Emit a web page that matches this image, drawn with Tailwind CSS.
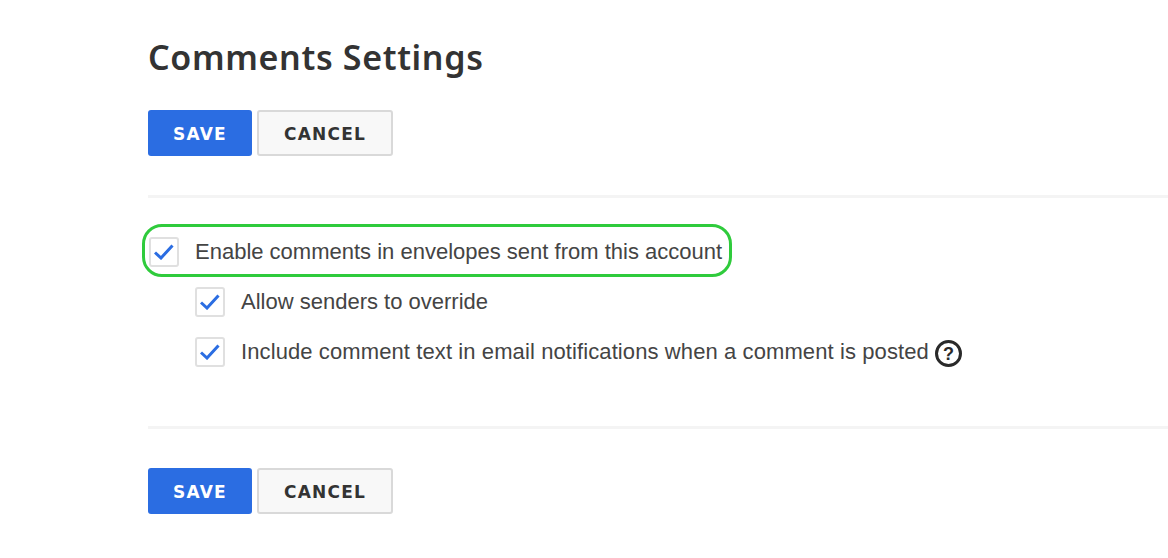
<!DOCTYPE html>
<html lang="en">
<head>
    <meta charset="UTF-8">
    <title>Comments Settings</title>
    <script src="https://cdn.jsdelivr.net/npm/@tailwindcss/browser@4"></script>
</head>
<body class="bg-white h-[558px] overflow-hidden pl-[148px] pt-[37px] font-['Liberation_Sans',sans-serif] text-[#444]">
    <h1 class="font-['Noto_Sans',sans-serif] text-[34px] leading-10 font-semibold text-[#333] tracking-[0.65px]">Comments Settings</h1>

    <div class="flex gap-[5px] mt-[33px]">
        <button class="w-[104px] h-[46px] pt-[3px] rounded-[3px] bg-[#2b6de2] text-white font-['DejaVu_Sans',sans-serif] font-bold text-[17px] tracking-[1.2px]">SAVE</button>
        <button class="w-[136px] h-[46px] pt-[3px] rounded-[3px] bg-[#f8f8f8] border-2 border-[#d9d9d9] text-[#333] font-['DejaVu_Sans',sans-serif] font-bold text-[17px] tracking-[1.2px]">CANCEL</button>
    </div>

    <div class="h-[3px] bg-[#f4f4f4] mt-[39px]"></div>

    <div class="relative mt-[39px] flex items-center h-[30px] gap-[16px] pl-px text-[22px]">
        <span class="absolute left-[-6px] top-[-13px] w-[590px] h-[53px] rounded-[20px] border-[3px] border-[#2fcb3c]"></span>
        <span class="w-[30px] h-[30px] rounded-[3px] border-2 border-[#e0e0e0] bg-white flex items-center justify-center">
            <svg width="20" height="16" viewBox="0 0 20 16" fill="none"><path d="M1 8.5 L7 14 L18.5 1.5" stroke="#2b6de2" stroke-width="3"/></svg>
        </span>
        <span class="-mt-[2px]">Enable comments in envelopes sent from this account</span>
    </div>

    <div class="mt-[20px] ml-[47px] flex items-center h-[30px] gap-[16px] text-[22px]">
        <span class="w-[30px] h-[30px] rounded-[3px] border-2 border-[#e0e0e0] bg-white flex items-center justify-center">
            <svg width="20" height="16" viewBox="0 0 20 16" fill="none"><path d="M1 8.5 L7 14 L18.5 1.5" stroke="#2b6de2" stroke-width="3"/></svg>
        </span>
        <span class="-mt-[2px]">Allow senders to override</span>
    </div>

    <div class="mt-[20px] ml-[47px] flex items-center h-[30px] gap-[16px] text-[22px]">
        <span class="w-[30px] h-[30px] rounded-[3px] border-2 border-[#e0e0e0] bg-white flex items-center justify-center">
            <svg width="20" height="16" viewBox="0 0 20 16" fill="none"><path d="M1 8.5 L7 14 L18.5 1.5" stroke="#2b6de2" stroke-width="3"/></svg>
        </span>
        <span class="-mt-[2px] tracking-[0.1px]">Include comment text in email notifications when a comment is posted</span>
        <span class="-ml-[10px] mt-[3px] w-[27px] h-[27px] rounded-full border-[3px] border-[#2a2a2a] flex items-center justify-center font-bold text-[18px] leading-none text-[#2a2a2a]">?</span>
    </div>

    <div class="h-[3px] bg-[#f4f4f4] mt-[59px]"></div>

    <div class="flex gap-[5px] mt-[39px]">
        <button class="w-[104px] h-[46px] pt-[3px] rounded-[3px] bg-[#2b6de2] text-white font-['DejaVu_Sans',sans-serif] font-bold text-[17px] tracking-[1.2px]">SAVE</button>
        <button class="w-[136px] h-[46px] pt-[3px] rounded-[3px] bg-[#f8f8f8] border-2 border-[#d9d9d9] text-[#333] font-['DejaVu_Sans',sans-serif] font-bold text-[17px] tracking-[1.2px]">CANCEL</button>
    </div>
</body>
</html>
